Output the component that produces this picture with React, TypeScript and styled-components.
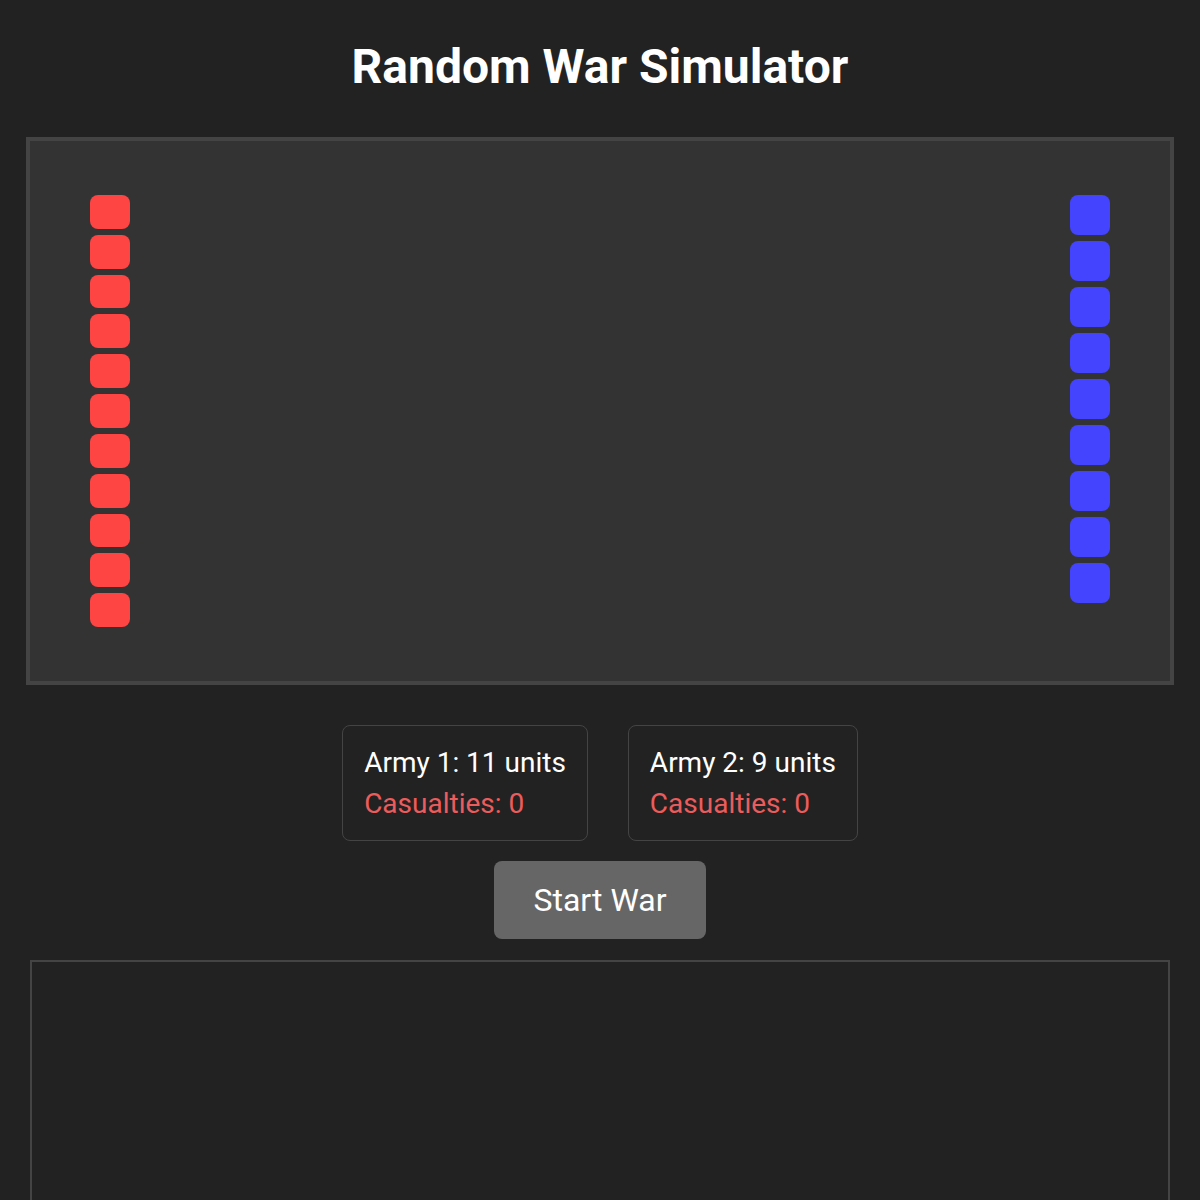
import styled, { createGlobalStyle } from 'styled-components'

const GlobalStyle = createGlobalStyle`
  html, body {
    margin: 0;
    padding: 0;
    background: #222222;
  }
  body {
    font-family: Roboto, "Liberation Sans", Arial, sans-serif;
    color: #ffffff;
  }
`

const Page = styled.div`
  display: flex;
  flex-direction: column;
  align-items: center;
  padding: 38px 30px 0;
  box-sizing: border-box;
  width: 1200px;

  & > * {
    flex-shrink: 0;
  }
`

const Title = styled.h1`
  margin: 0 0 42px;
  font-size: 48px;
  font-weight: 700;
  line-height: normal;
`

const Battlefield = styled.div`
  width: 1148px;
  height: 548px;
  box-sizing: border-box;
  border: 4px solid #444444;
  background: #333333;
  display: flex;
  justify-content: space-between;
  align-items: flex-start;
  padding: 54px 60px;
`

const ArmyColumn = styled.div`
  height: 432px;
  width: 40px;
  display: flex;
  flex-direction: column;
  gap: 6px;
`

const Unit = styled.div<{ $side: 'red' | 'blue' }>`
  width: 40px;
  height: 40px;
  min-height: 0;
  flex-shrink: 1;
  border-radius: 8px;
  background: ${p => (p.$side === 'red' ? '#ff4444' : '#4444ff')};
`

const StatsRow = styled.div`
  display: flex;
  gap: 40px;
  margin-top: 40px;
`

const StatCard = styled.div`
  border: 1px solid #444444;
  border-radius: 8px;
  padding: 20px 21px;
  display: flex;
  flex-direction: column;
  gap: 8px;
  font-size: 28px;
  line-height: normal;
`

const Casualties = styled.div`
  color: #ec5c5c;
`

const StartButton = styled.button`
  margin-top: 20px;
  width: 212px;
  height: 78px;
  border: none;
  border-radius: 8px;
  background: #666666;
  color: #ffffff;
  font-family: Roboto, "Liberation Sans", Arial, sans-serif;
  font-size: 32px;
  cursor: pointer;
`

const Log = styled.div`
  margin-top: 21px;
  width: 1140px;
  height: 300px;
  box-sizing: border-box;
  border: 2px solid #444444;
  background: #222222;
`

const armies = [
  { name: 'Army 1', units: 11, casualties: 0, side: 'red' as const },
  { name: 'Army 2', units: 9, casualties: 0, side: 'blue' as const },
]

export default function App() {
  return (
    <>
      <GlobalStyle />
      <Page>
        <Title>Random War Simulator</Title>
        <Battlefield>
          {armies.map(a => (
            <ArmyColumn key={a.name}>
              {Array.from({ length: a.units }).map((_, i) => (
                <Unit key={i} $side={a.side} />
              ))}
            </ArmyColumn>
          ))}
        </Battlefield>
        <StatsRow>
          {armies.map(a => (
            <StatCard key={a.name}>
              <div>
                {a.name}: {a.units} units
              </div>
              <Casualties>Casualties: {a.casualties}</Casualties>
            </StatCard>
          ))}
        </StatsRow>
        <StartButton>Start War</StartButton>
        <Log />
      </Page>
    </>
  )
}
